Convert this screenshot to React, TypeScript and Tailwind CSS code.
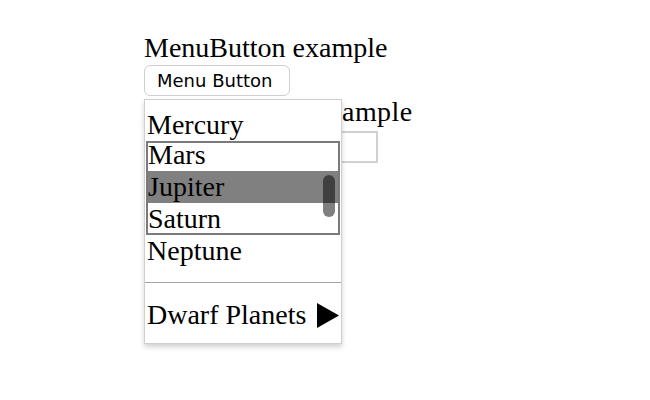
export default function App() {
  return (
    <div className="min-h-screen bg-white pt-[32px] pl-[144px] text-black font-['Liberation_Serif',serif]">
      <div className="relative w-fit">
        <h1 className="text-[28px] leading-[32px] font-normal whitespace-nowrap">MenuButton example</h1>
        <button className="mt-[1px] h-[31px] w-[146px] rounded-[6px] border border-[#cfcfcf] bg-white pl-[12px] text-left text-[18px] leading-[29px] font-['DejaVu_Sans',sans-serif]">
          Menu Button
        </button>
        <h2 className="text-[28px] leading-[32px] font-normal tracking-[0.4px] whitespace-nowrap">Autocomplete example</h2>
        <input className="mt-[3px] block h-[32px] w-[234px] border-2 border-[#d0d0d0] bg-white outline-none" />

        <div className="absolute top-[67px] left-0 w-[198px] border border-[#cfcfcf] bg-white pt-[9px] shadow-[0_3px_5px_rgba(0,0,0,0.18)] text-[28px]">
          <div className="h-[32px] leading-[32px] pl-[2px]">Mercury</div>
          <div className="relative mx-[1px] h-[94px] overflow-hidden border-2 border-[#7a7a7a]">
            <div className="-mt-[4px]">
              <div className="h-[32px] leading-[32px]">Mars</div>
              <div className="h-[32px] leading-[32px] bg-[#808080]">Jupiter</div>
              <div className="h-[32px] leading-[32px]">Saturn</div>
            </div>
            <div className="absolute right-[3px] top-[32px] h-[42px] w-[12px] rounded-full bg-black/50" />
          </div>
          <div className="h-[32px] leading-[32px] pl-[2px]">Neptune</div>
          <div className="h-[15px]" />
          <div className="border-t border-[#a3a3a3] pt-[16px] pb-[12px] pl-[2px] pr-[2px] flex items-center justify-between">
            <span className="leading-[32px]">Dwarf Planets</span>
            <svg width="22" height="25" viewBox="0 0 22 25" className="mt-[1px]">
              <polygon points="0,0 22,12.5 0,25" fill="#000" />
            </svg>
          </div>
        </div>
      </div>
    </div>
  );
}
